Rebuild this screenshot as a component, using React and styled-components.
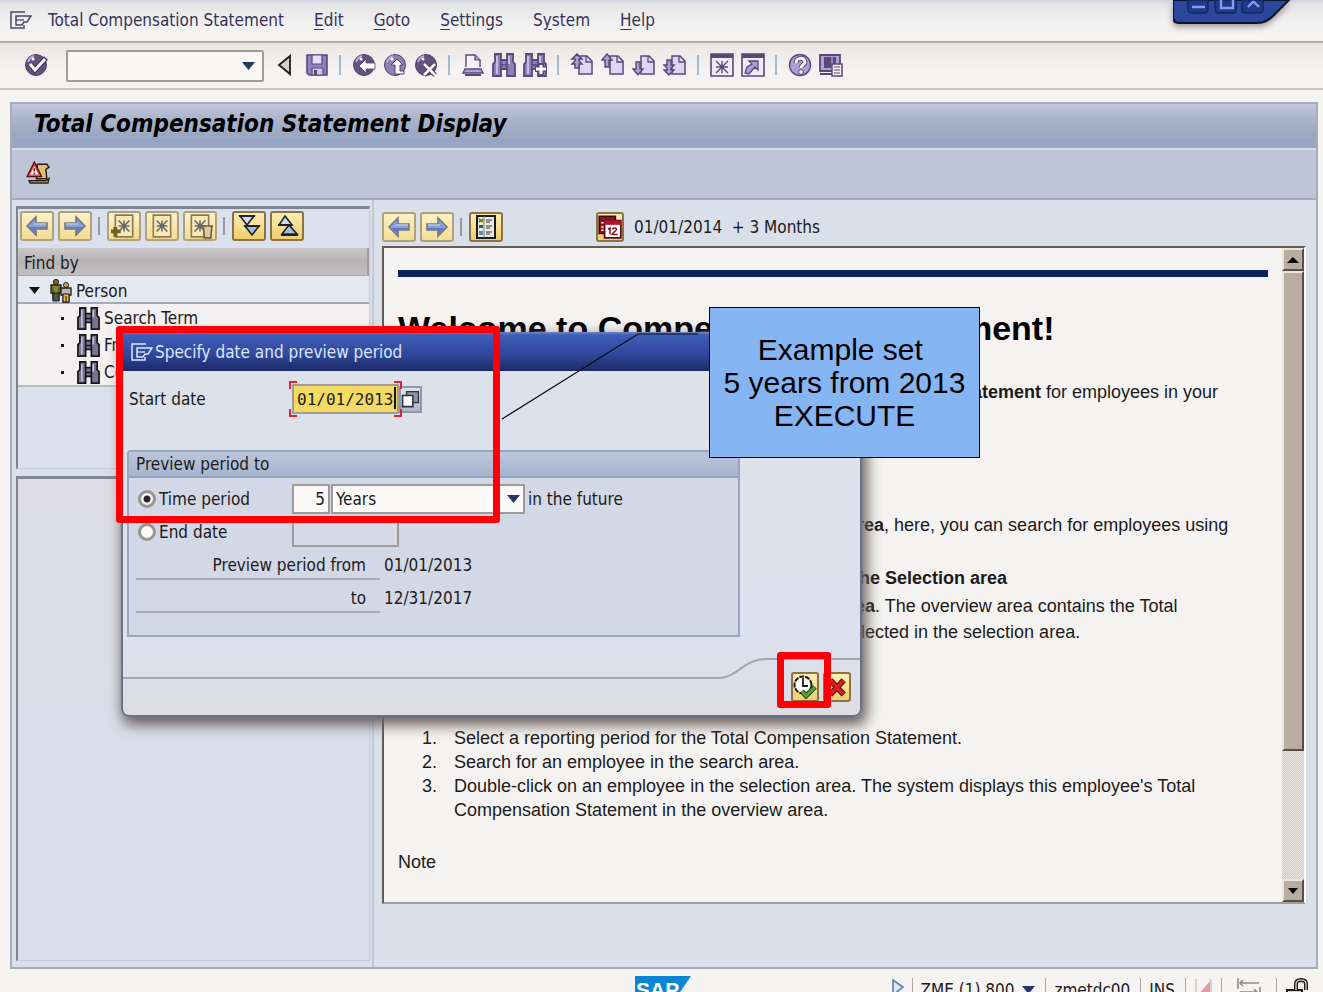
import React, { Component } from "react"
import styled, { createGlobalStyle, css } from "styled-components"

const GlobalStyle = createGlobalStyle`
  * {
    box-sizing: border-box;
  }

  body {
    margin: 0;
    background-color: #f5f4f3;
    color: #1c1a1a;
    font-family: "DejaVu Sans Condensed", "DejaVu Sans", sans-serif;
    font-size: 17px;
    line-height: 24px;
  }

  button,
  input,
  select {
    margin: 0;
    padding: 0;
    border: 0;
    border-radius: 0;
    background: none;
    color: inherit;
    font: inherit;
  }

  svg {
    display: block;
    flex: none;
  }
`

/* ---------- icons ---------- */

const PURPLE = "#5a4878"
const LILAC = "#a9a0d6"

const Icon = ({ size = 24, children }) => (
  <svg width={size} height={size} viewBox="0 0 24 24" fill="none" aria-hidden="true">
    {children}
  </svg>
)

const Ball = ({ fill = "#63527f", children }) => (
  <Icon>
    <circle cx="12" cy="12" r="10.5" fill={fill} stroke="#514168" />
    <path d="M4 9a9 9 0 0 1 6-6" stroke="#b9aede" strokeWidth="2" />
    <circle cx="9" cy="6" r="1.5" fill="#fff" />
    {children}
  </Icon>
)

const OkIcon = () => (
  <Ball>
    <path d="M6 11l5 6L22 5" stroke="#3f3158" strokeWidth="5" />
    <path d="M6 11l5 6L21 6" stroke="#fff" strokeWidth="3" />
  </Ball>
)
const BackIcon = () => (
  <Ball>
    <path d="M7 13l7-7v4h9v6h-9v4z" fill="#fff" stroke="#514168" strokeWidth="0.8" />
  </Ball>
)
const UpIcon = () => (
  <Ball fill="#8c82b4">
    <path d="M14 6l6 6h-3v6h4v3h-9v-9H8z" fill="#fff" stroke="#514168" strokeWidth="1" />
  </Ball>
)
const CancelBallIcon = () => (
  <Ball>
    <path d="M10 11l11 11M21 11L10 22" stroke="#514168" strokeWidth="5" />
    <path d="M10 11l11 11M21 11L10 22" stroke="#fff" strokeWidth="2.6" />
  </Ball>
)
const SaveIcon = () => (
  <Icon>
    <path d="M2 2h20v20H4l-2-2z" fill="#8e84bd" stroke={PURPLE} strokeWidth="1.6" />
    <path d="M7 2h10v9H7z" fill="#e4def6" stroke={PURPLE} strokeWidth="1.2" />
    <path d="M7 15h11v7H7z" fill="#cdc6ea" stroke={PURPLE} strokeWidth="1.2" />
    <path d="M9 17h3v5H9z" fill={PURPLE} />
  </Icon>
)
const PrintIcon = () => (
  <Icon>
    <path d="M5 14V2h9l5 5v7" fill="#f3f0fb" stroke={PURPLE} strokeWidth="1.4" />
    <path d="M14 2v5h5" fill={LILAC} stroke={PURPLE} strokeWidth="1.2" />
    <path d="M4 16h16l2 4H2z" fill={LILAC} stroke={PURPLE} strokeWidth="1.4" />
    <path d="M4 22h16" stroke={PURPLE} strokeWidth="2" />
  </Icon>
)

const Binoculars = ({ fill, stroke, shine }) => (
  <>
    <path
      d="M3 1h6v6h6V1h6v8l2 2v12h-8v-7H9v7H1V11l2-2z"
      fill={fill}
      stroke={stroke}
      strokeWidth="1.8"
    />
    <path d="M9 7v9M15 7v9M9 12h6" stroke={stroke} strokeWidth="1.6" />
    <path d="M5 3v18M17 3v8" stroke={shine} strokeWidth="1.6" />
  </>
)
const FindIcon = () => (
  <Icon>
    <Binoculars fill="#8b80bb" stroke={PURPLE} shine="#d5cdf0" />
  </Icon>
)
const FindNextIcon = () => (
  <Icon>
    <Binoculars fill="#8b80bb" stroke={PURPLE} shine="#d5cdf0" />
    <path d="M18 10v13M12 16h12" stroke={PURPLE} strokeWidth="6" />
    <path d="M18 12v9M13 16h10" stroke="#fff" strokeWidth="3" />
  </Icon>
)
const DarkFindIcon = () => (
  <Icon size={23}>
    <Binoculars fill="#77748f" stroke="#17151c" shine="#c6c6dc" />
  </Icon>
)

const PageIcon = ({ double, down }) => (
  <Icon>
    <path d="M9 3h8l5 5v13H9z" fill="#ddd7f3" stroke={PURPLE} strokeWidth="1.5" />
    <path d="M16 3v6h6" stroke={PURPLE} strokeWidth="1.3" />
    {!down && !double && <path d="M6 1l5 6H8v7H4V7H1z" fill={LILAC} stroke={PURPLE} strokeWidth="1.4" />}
    {double && !down && (
      <path d="M7 1l5 5H9v2l3 3H9v4H5v-4H2l3-3V6H2z" fill={LILAC} stroke={PURPLE} strokeWidth="1.5" />
    )}
    {down && !double && <path d="M6 22l-5-6h3V9h4v7h3z" fill={LILAC} stroke={PURPLE} strokeWidth="1.4" />}
    {double && down && (
      <path d="M6 22l-5-5h3v-2l-3-3h3V7h4v5h3l-3 3v2h3z" fill={LILAC} stroke={PURPLE} strokeWidth="1.5" />
    )}
  </Icon>
)

const Burst = ({ cx, cy, r, color }) => (
  <path
    d={`M${cx - r} ${cy}h${r * 2}M${cx} ${cy - r}v${r * 2}M${cx - r} ${cy - r}l${r * 2} ${r * 2}M${cx + r} ${cy - r}l${-r * 2} ${r * 2}`}
    stroke={color}
    strokeWidth="1.4"
  />
)
const SessionIcon = () => (
  <Icon>
    <path d="M1 1h22v22H1z" fill="#efecf6" stroke={PURPLE} strokeWidth="1.6" />
    <path d="M1 1h22v4H1z" fill={PURPLE} />
    <Burst cx={12} cy={14} r={6} color={PURPLE} />
  </Icon>
)
const ShortcutIcon = () => (
  <Icon>
    <path d="M1 1h22v22H1z" fill="#efecf6" stroke={PURPLE} strokeWidth="1.6" />
    <path d="M1 1h22v4H1z" fill={PURPLE} />
    <path d="M8 8h9v9l-3-3-6 7-4-1 2-6 5-3z" fill={LILAC} stroke={PURPLE} strokeWidth="1.3" />
  </Icon>
)
const HelpIcon = () => (
  <Icon>
    <circle cx="12" cy="12" r="10.5" fill={LILAC} stroke={PURPLE} strokeWidth="1.4" />
    <path d="M8 10c0-6 9-6 9-1 0 3-4 3-4 6" stroke={PURPLE} strokeWidth="5" />
    <path d="M8 10c0-6 9-6 9-1 0 3-4 3-4 6" stroke="#fff" strokeWidth="3" />
    <circle cx="13" cy="19" r="2.4" fill="#fff" stroke={PURPLE} />
  </Icon>
)
const LayoutIcon = () => (
  <Icon>
    <path d="M1 2h20v16H1z" fill={LILAC} stroke={PURPLE} strokeWidth="1.8" />
    <path d="M5 4h12v11H5z" fill={PURPLE} />
    <path d="M13 4v11" stroke="#8e84bd" strokeWidth="2" />
    <path d="M1 21h12" stroke={PURPLE} strokeWidth="2" />
    <path d="M13 11h10v12H13z" fill="#f7f2e8" stroke={PURPLE} strokeWidth="1.5" />
    <path d="M15 14h6M15 17h6M15 20h6" stroke={PURPLE} strokeWidth="1.2" />
  </Icon>
)

const WindowMenuIcon = ({ color }) => (
  <Icon>
    <path d="M17 4H3v16h13v-3" stroke={color} strokeWidth="1.5" />
    <path d="M8 8h15l-4 6h-3l-2 3H8z" stroke={color} strokeWidth="1.5" />
    <path d="M8 12h8" stroke={color} strokeWidth="1.3" />
  </Icon>
)
const WarningScrollIcon = () => (
  <Icon size={25}>
    <path d="M11 4h9l2 3-3 2 1 9H10z" fill="#d9c374" stroke="#2a1c10" strokeWidth="1.4" />
    <path d="M3 20h16l3-2-1 4H4z" fill="#f1d989" stroke="#2a1c10" strokeWidth="1.4" />
    <path d="M8 2l7 14H1z" fill="#e05048" stroke="#5a1010" strokeWidth="1.3" />
    <path d="M8 6l4 8H4z" fill="#fff" />
    <path d="M8 8v3M8 12v2" stroke="#7c1414" strokeWidth="1.6" />
  </Icon>
)

const ArrowIcon = ({ flip }) => (
  <Icon size={24}>
    <g transform={flip ? "matrix(-1 0 0 1 24 0)" : undefined}>
      <path d="M2 12l9-9v6h11v6H11v6z" fill="#86a0d8" stroke="#77767c" strokeWidth="1.6" />
      <path d="M4 13h17v1H10v4z" fill="#5c78c8" />
      <path d="M9 10h12" stroke="#b4c6dc" strokeWidth="1.6" />
    </g>
  </Icon>
)
const NoteIcon = ({ plus, trash }) => (
  <Icon size={26}>
    <path d="M4 2h16v20H4z" fill="#f8e9b4" stroke="#8f7856" strokeWidth="1.5" />
    <Burst cx={12} cy={12} r={5} color="#66656a" />
    {plus && <path d="M4 13v9M0 17h9" stroke="#6b6420" strokeWidth="3.6" />}
    {trash && (
      <path d="M15 12h8l-1 11h-6zM14 12h10" fill="#d8cba0" stroke="#6f5c3c" strokeWidth="1.5" />
    )}
  </Icon>
)
const ExpandIcon = () => (
  <Icon>
    <path d="M3 2h14l-7 9z" fill="#cfdcf4" stroke="#1d222c" strokeWidth="1.6" />
    <path d="M8 12h14l-7 9z" fill="#a9bce2" stroke="#1d222c" strokeWidth="1.6" />
    <path d="M2 2h16M7 12h16" stroke="#1d222c" strokeWidth="2" />
  </Icon>
)
const CollapseIcon = () => (
  <Icon>
    <path d="M10 2l7 9H4z" fill="#cfdcf4" stroke="#1d222c" strokeWidth="1.6" />
    <path d="M14 11l8 9H7z" fill="#a9bce2" stroke="#1d222c" strokeWidth="1.6" />
    <path d="M3 11h14M6 21h17" stroke="#1d222c" strokeWidth="2" />
  </Icon>
)
const ColumnsIcon = () => (
  <Icon>
    <path d="M3 1h18v22H3z" fill="#eceadf" stroke="#191820" strokeWidth="2" />
    <path d="M10 1v22" stroke="#77767c" strokeWidth="1" />
    <path d="M5 4l4 3M9 4L5 7" stroke="#7b7a10" strokeWidth="1.6" />
    <path d="M5 10h4v3H5z" fill="#31643a" />
    <path d="M5 16h4v4H5z" fill="#5d86b8" />
    <path d="M12 5h6M12 7h4M12 11h6M12 13h4M12 17h6M12 19h4" stroke="#34333b" strokeWidth="1.2" />
  </Icon>
)
const CalendarIcon = () => (
  <Icon size={26}>
    <path d="M2 2h15v16H2z" fill="#8f1423" stroke="#3c070e" strokeWidth="1.4" />
    <path d="M4 8h3M4 12h3M4 15h3" stroke="#fff" strokeWidth="1.4" />
    <path d="M7 6h15v16H7z" fill="#fff" stroke="#5f0a16" strokeWidth="1.6" />
    <path d="M7 6h15v4H7z" fill="#b81428" />
    <path d="M10 14l2-1v6M14 14c2-2 4-1 4 0 0 2-4 3-4 5h5" stroke="#8c1020" strokeWidth="1.4" />
  </Icon>
)
const PersonsIcon = () => (
  <Icon>
    <circle cx="7" cy="3" r="2.6" fill="#8a6a28" stroke="#241d10" />
    <path d="M2 6h10v8h-2v7H4v-7H2z" fill="#7f8a30" stroke="#241d10" strokeWidth="1.3" />
    <path d="M4 14h6v8H4z" fill="#54504a" stroke="#241d10" />
    <path d="M4 8v5M10 8v5" stroke="#3c4015" />
    <circle cx="17" cy="6" r="2.5" fill="#c7a94e" stroke="#241d10" />
    <path d="M12 9h10v7h-2v7h-6v-7h-2z" fill="#b4b2c4" stroke="#241d10" strokeWidth="1.3" />
    <path d="M14 15h6v8h-6z" fill="#d9bc50" stroke="#241d10" />
    <path d="M17 17v6" stroke="#241d10" />
  </Icon>
)
const ExecuteIcon = () => (
  <Icon>
    <circle cx="10" cy="10" r="8.5" fill="#fff" stroke="#1b1b1b" strokeWidth="2" strokeDasharray="5 1" />
    <path d="M10 3v8h5" stroke="#1b1b1b" strokeWidth="1.8" />
    <path d="M9 16l4 5 9-9" stroke="#1f4a12" strokeWidth="5" />
    <path d="M9 16l4 5 9-9" stroke="#58a03a" strokeWidth="3" />
  </Icon>
)
const CloseIcon = () => (
  <Icon size={20}>
    <path d="M4 4l16 17M20 4L4 21" stroke="#5d0d10" strokeWidth="7" />
    <path d="M4 4l16 17M20 4L4 21" stroke="#d42020" strokeWidth="4.4" />
  </Icon>
)
const PickIcon = () => (
  <Icon size={19}>
    <path d="M7 2h15v14H7z" fill="#8e94a4" stroke="#30323a" strokeWidth="1.6" />
    <path d="M2 7h13v14H2z" fill="#fff" stroke="#30323a" strokeWidth="2" />
  </Icon>
)
const DownTriangle = ({ width = 13, height = 8, color = "#243a5c" }) => (
  <svg width={width} height={height} viewBox="0 0 12 8" preserveAspectRatio="none" aria-hidden="true">
    <path d="M0 0h12L6 8z" fill={color} />
  </svg>
)
const UpTriangle = () => (
  <svg width="12" height="6" viewBox="0 0 12 6" aria-hidden="true">
    <path d="M0 6h12L6 0z" fill="#000" />
  </svg>
)
const HistoryIcon = () => (
  <svg width="15" height="24" viewBox="0 0 15 24" aria-hidden="true">
    <path d="M13 3v18L2 12z" fill="#d6d0cc" stroke="#1d1a1a" strokeWidth="1.8" />
  </svg>
)

/* ---------- shell ---------- */

const Screen = styled.div`
  position: relative;
  display: flex;
  flex-direction: column;
  height: 100vh;
  overflow: hidden;
`

const MenuBar = styled.nav`
  display: flex;
  align-items: center;
  gap: 30px;
  flex: none;
  height: 43px;
  padding: 0 8px 1px;
  border-bottom: 2px solid #b0adab;
  background: linear-gradient(#cdcfdf, #e4e3e6 4px, #f3f2f2 24px, #f5f4f2);
  color: #37335a;
`

const MenuItem = styled.button`
  display: flex;
  align-items: center;
  gap: 16px;

  u {
    text-underline-offset: 3px;
  }
`

const StandardBar = styled.div`
  display: flex;
  align-items: center;
  gap: 7px;
  flex: none;
  height: 47px;
  padding: 0 24px 2px;
  border-bottom: 2px solid #c8c5c3;
  background: linear-gradient(#e9e6e4, #f5f3f1 60%);
`

const CommandField = styled.div`
  display: flex;
  align-items: center;
  width: 198px;
  height: 32px;
  margin: 2px 6px 0 11px;
  padding-right: 7px;
  border: 2px solid #a29a96;
  border-radius: 2px;
  background-color: #f8f7f5;

  input {
    flex: 1;
    min-width: 0;
    padding-left: 4px;
  }
`

const ToolButton = styled.button`
  flex: none;
  margin-right: ${props => props.$spaced ? 6 : 0}px;
`

const Divider = styled.span`
  width: 2px;
  height: ${props => props.$tall ? 20 : 18}px;
  margin: ${props => props.$tall ? "0 4px 0 3px" : "0 3px 0 2px"};
  background-color: ${props => props.$tall ? "#a3b9cc" : "#9a9a9e"};
`

const WindowTab = styled.div`
  position: absolute;
  top: 0;
  right: 32px;
  width: 118px;
  height: 26px;
  filter: drop-shadow(0 3px 3px #a09890);
`

const Frame = styled.main`
  display: flex;
  flex-direction: column;
  flex: 1;
  min-height: 0;
  margin: 12px 5px 0 10px;
  border: 2px solid #a9abb8;
  background-color: #dae0ea;
`

const Title = styled.h1`
  flex: none;
  height: 46px;
  margin: 0;
  padding: 5px 22px;
  border-bottom: 2px solid #d8dfec;
  background: linear-gradient(#c2c9df, #aab3c9 35%, #95a4c2 85%, #9fabc8);
  color: #000;
  font-size: 24px;
  font-style: italic;
  font-weight: bold;
  line-height: 30px;
`

const AppBar = styled.div`
  display: flex;
  align-items: center;
  flex: none;
  height: 50px;
  padding: 0 14px 4px;
  border-bottom: 2px solid #a6a9b9;
  background-color: #bec5d7;
`

const Workspace = styled.div`
  display: flex;
  flex: 1;
  min-height: 0;
`

/* ---------- left column ---------- */

const Sidebar = styled.aside`
  display: flex;
  flex-direction: column;
  gap: 7px;
  flex: none;
  width: 360px;
  padding: 6px 2px 6px 4px;
`

const Pane = styled.section`
  border: 1px solid #c3cad8;
  border-top: 3px solid #7f8693;
  border-left: 2px solid #7d828d;
  background-color: #dbe1ec;
  ${props => props.$fill ? css`
    flex: 1;
    background: linear-gradient(#dedde3, #d9dfea 50%);
  ` : css`
    height: 263px;
  `}
`

const IconBar = styled.div`
  display: flex;
  align-items: center;
  gap: 4px;
  height: 39px;
  padding: 0 2px 6px;
`

const IconButton = styled.button`
  display: flex;
  align-items: center;
  justify-content: center;
  flex: none;
  width: ${props => props.$narrow ? 28 : 34}px;
  height: 30px;
  border: 2px solid ${props => props.$strong ? "#8c7346" : "#b2a178"};
  border-radius: 3px;
  background: ${props => props.$strong
    ? "linear-gradient(#fbeeb4, #f0cf6c)"
    : "linear-gradient(#fbf1c8, #f2dd94)"};
`

const FindBy = styled.h2`
  margin: 0;
  padding: 3px 6px 0;
  border-right: 2px solid #a09c9e;
  border-bottom: 1px solid #a7a3a4;
  background: linear-gradient(#c9c7c9, #b7b4b6 50%, #c2bfc1);
  font-size: 17px;
  font-weight: normal;
  line-height: 24px;
`

const TreeRoot = styled.div`
  display: flex;
  align-items: center;
  gap: 3px;
  height: 28px;
  padding: 3px 0 0 11px;
  border-bottom: 2px solid #a3aabb;
  background-color: #e4e8f0;

  svg:first-child {
    margin-right: 6px;
  }
`

const Tree = styled.ul`
  margin: 0;
  padding: 0;
  border-bottom: 2px solid #b8bac3;
  background-color: #f2f0f0;
  list-style: none;
`

const TreeItem = styled.li`
  display: flex;
  align-items: center;
  gap: 4px;
  height: 27px;
  padding: 1px 0 0 43px;

  &::before {
    width: 3px;
    height: 3px;
    margin-right: 9px;
    background-color: #1c1a1a;
    content: "";
  }
`

/* ---------- right column ---------- */

const Content = styled.section`
  display: flex;
  flex-direction: column;
  flex: 1;
  min-width: 0;
  padding: 8px 10px 63px 8px;
  border-left: 2px solid #c2c9d4;
`

const ContentBar = styled.div`
  display: flex;
  align-items: center;
  gap: 4px;
  flex: none;
  height: 38px;
`

const Period = styled.div`
  display: flex;
  align-items: center;
  gap: 10px;
  margin-left: 89px;
  white-space: pre;
`

const Viewer = styled.div`
  display: flex;
  flex: 1;
  min-height: 0;
  border: 2px solid #655b55;
  border-right-color: #fff;
  border-bottom-color: #a39b95;
  background-color: #f4f3f1;
`

const Article = styled.article`
  flex: 1;
  min-width: 0;
  overflow: hidden;
  padding: 22px 14px 0;
  font-family: "Liberation Sans", Arial, sans-serif;
  font-size: 18px;

  hr {
    height: 7px;
    margin: 0;
    border: 0;
    background-color: #0c2358;
  }

  p {
    margin: 0;
    white-space: nowrap;
  }
`

const Heading = styled.h2`
  display: flex;
  gap: 45px;
  margin: 32px 0;
  color: #000;
  font-size: 34px;
  line-height: 38px;
  white-space: nowrap;
`

const Paragraph = styled.p`
  && {
    margin-bottom: ${props => props.$after || 0}px;
    padding-left: ${props => props.$indent || 0}px;
    line-height: 26px;
  }
`

const Steps = styled.ol`
  margin: 0 0 28px;
  padding: 0 0 0 24px;
  list-style: none;

  li {
    display: flex;
    max-width: 820px;
  }

  span {
    flex: 0 0 32px;
  }
`

const ScrollBar = styled.div`
  display: flex;
  flex-direction: column;
  flex: none;
  width: 22px;
  background: repeating-conic-gradient(#cfc7c0 0 25%, #ece8e4 0 50%) 0 0 / 2px 2px;
`

const bevel = css`
  border: 2px solid #e9e3dc;
  border-right-color: #5b4d45;
  border-bottom-color: #5b4d45;
  background-color: #b9ada0;
`

const ScrollButton = styled.button`
  ${bevel}
  display: flex;
  align-items: center;
  justify-content: center;
  flex: none;
  height: 23px;
`

const ScrollThumb = styled.div`
  ${bevel}
  flex: 0 1 480px;
`

const ScrollSpace = styled.div`
  flex: 1;
`

/* ---------- dialog ---------- */

const Dialog = styled.form`
  position: absolute;
  top: 332px;
  left: 121px;
  display: flex;
  flex-direction: column;
  width: 741px;
  border: 2px solid #65718f;
  border-top: 0;
  border-radius: 4px 4px 8px 8px;
  background: linear-gradient(#dde1e8, #dce2ee 80%, #dddce2);
  box-shadow: 3px 6px 14px 2px #6b5f5c;
`

const DialogTitle = styled.h2`
  display: flex;
  align-items: center;
  gap: 2px;
  height: 39px;
  margin: 0 -1px;
  padding-left: 7px;
  border-radius: 4px 4px 0 0;
  background: linear-gradient(#6f86c4, #3f5db6 3px, #31499f 55%, #1b2a66);
  color: #dfe6fa;
  font-size: 17px;
  font-weight: normal;
`

const StartRow = styled.div`
  display: flex;
  align-items: center;
  height: 32px;
  margin: 12px 6px 35px;

  label {
    width: 163px;
  }
`

const inset = css`
  height: 30px;
  border: 2px solid #a09a9a;
  background-color: #fbfaf8;
`

const FocusBox = styled.div`
  position: relative;
  width: 107px;

  input {
    ${inset}
    display: block;
    width: 100%;
    padding-left: 3px;
    background-color: #f3da62;
    font-family: "DejaVu Sans Mono", monospace;
    font-size: 16px;
  }

  svg {
    position: absolute;
    top: -3px;
    left: -3px;
  }
`

const PickButton = styled.button`
  display: flex;
  align-items: center;
  justify-content: center;
  width: 23px;
  height: 27px;
  border: 2px solid #8f99ab;
  background: linear-gradient(#dfe3ea, #a9b4c6);
`

const Group = styled.fieldset`
  height: 187px;
  min-width: 0;
  margin: 0 120px 0 4px;
  padding: 0;
  border: 2px solid #98a5bd;
  border-radius: 4px 4px 0 0;
  background-color: #d3d8e6;
`

const Legend = styled.legend`
  float: left;
  width: 100%;
  padding: 0 7px;
  border-bottom: 2px solid #93a2bd;
  background: linear-gradient(#bcc6da, #a6b5d0);
`

const GroupRow = styled.div`
  display: flex;
  align-items: center;
  clear: both;
  height: 33px;
  padding-left: 9px;

  &:first-of-type {
    height: 37px;
    padding-top: 5px;
  }
`

const RadioLabel = styled.label`
  display: flex;
  align-items: center;
  gap: 3px;
  width: 154px;

  input {
    width: 18px;
    height: 18px;
    border: 3px solid #9a9494;
    border-radius: 50%;
    background-color: #fbfaf7;
    appearance: none;
  }

  input:checked {
    background: radial-gradient(#2e2323 0 3px, #fbfaf7 4px);
  }
`

const NumberInput = styled.input`
  ${inset}
  width: ${props => props.$wide ? 107 : 38}px;
  padding-right: 3px;
  background-color: ${props => props.$wide ? "#d6dbe7" : "#fbfaf8"};
  text-align: right;
`

const SelectBox = styled.div`
  ${inset}
  display: grid;
  align-items: center;
  width: 194px;
  margin: 0 3px 0 1px;

  select {
    grid-area: 1 / 1;
    width: 100%;
    padding-left: 3px;
    appearance: none;
  }

  svg {
    grid-area: 1 / 1;
    margin-right: 3px;
    justify-self: end;
    pointer-events: none;
  }
`

const OutputRow = styled.div`
  display: flex;
  height: 33px;
  padding: 5px 0 1px 7px;

  span {
    width: 244px;
    padding-right: 14px;
    border-bottom: 2px solid #a7abb8;
    text-align: right;
  }

  output {
    padding: 0 4px;
  }
`

const DialogFooter = styled.div`
  display: grid;
  height: 57px;
  margin-top: 21px;
`

const Edge = styled.div`
  display: flex;
  grid-area: 1 / 1;
  height: 21px;

  &::before {
    flex: 1;
    border-bottom: 2px solid #a5a5ac;
    content: "";
  }

  &::after {
    width: 94px;
    border-top: 2px solid #a5a5ac;
    content: "";
  }
`

const Actions = styled.div`
  display: flex;
  grid-area: 1 / 1;
  justify-content: flex-end;
  gap: 4px;
  padding: 14px 9px 0;
`

/* ---------- callouts ---------- */

const Highlight = styled.div`
  position: absolute;
  top: 326px;
  left: 116px;
  width: 384px;
  height: 197px;
  border: 7px solid #fb0007;
  border-radius: 3px;
  pointer-events: none;

  ${props => props.$small && css`
    top: 652px;
    left: 777px;
    width: 54px;
    height: 56px;
  `}
`

const Pointer = styled.svg`
  position: absolute;
  top: 332px;
  left: 500px;
  pointer-events: none;
`

const Callout = styled.div`
  position: absolute;
  top: 307px;
  left: 709px;
  display: flex;
  flex-direction: column;
  justify-content: center;
  width: 271px;
  height: 151px;
  border: 1px solid #000;
  background-color: #86b5f4;
  color: #000;
  font-family: "Liberation Sans", Arial, sans-serif;
  font-size: 30px;
  line-height: 33px;
  text-align: center;
  white-space: pre;
`

/* ---------- status bar ---------- */

const StatusBar = styled.footer`
  display: flex;
  align-items: flex-start;
  gap: 8px;
  flex: none;
  height: 23px;
  padding: 9px 14px 0;
  overflow: hidden;
`

const Logo = styled.div`
  flex: 1;
  margin-top: -2px;
  padding-left: 621px;
`

const StatusDivider = styled.span`
  width: 1px;
  height: 20px;
  background-color: #aaa6a4;
`

const StatusCell = styled.span`
  display: flex;
  align-items: center;
  gap: 8px;
  padding-right: 2px;
`

const menus = [["", "E", "dit"], ["", "G", "oto"], ["", "S", "ettings"], ["S", "y", "stem"], ["", "H", "elp"]]

const steps = [
  "Select a reporting period for the Total Compensation Statement.",
  "Search for an employee in the search area.",
  "Double-click on an employee in the selection area. The system displays this employee's Total Compensation Statement in the overview area.",
]

const toolGroups = [
  [["Back", <BackIcon />], ["Exit", <UpIcon />], ["Cancel", <CancelBallIcon />]],
  [["Print", <PrintIcon />], ["Find", <FindIcon />], ["Find next", <FindNextIcon />]],
  [
    ["First page", <PageIcon double />],
    ["Previous page", <PageIcon />],
    ["Next page", <PageIcon down />],
    ["Last page", <PageIcon double down />],
  ],
  [["New session", <SessionIcon />], ["Create shortcut", <ShortcutIcon />]],
  [["Help", <HelpIcon />], ["Customize layout", <LayoutIcon />]],
]

class App extends Component {
  render() {
    return (
      <Screen>
        <GlobalStyle />
        <MenuBar>
          <MenuItem>
            <WindowMenuIcon color="#4b4768" />
            Total Compensation Statement
          </MenuItem>
          {menus.map(([before, key, after]) => (
            <MenuItem key={key}>
              <span>{before}<u>{key}</u>{after}</span>
            </MenuItem>
          ))}
        </MenuBar>

        <StandardBar>
          <ToolButton aria-label="Enter"><OkIcon /></ToolButton>
          <CommandField>
            <input aria-label="Command" />
            <DownTriangle />
          </CommandField>
          <ToolButton $spaced aria-label="History"><HistoryIcon /></ToolButton>
          <ToolButton aria-label="Save"><SaveIcon /></ToolButton>
          {toolGroups.map((group, index) => (
            <React.Fragment key={index}>
              <Divider $tall />
              {group.map(([label, icon]) => (
                <ToolButton key={label} aria-label={label}>{icon}</ToolButton>
              ))}
            </React.Fragment>
          ))}
        </StandardBar>

        <WindowTab>
          <svg width="118" height="26" viewBox="0 0 118 26">
            <path d="M0 0v17q0 6 6 6h78q10 0 18-9l14-14z" fill="#2b479c" stroke="#0b1430" strokeWidth="2" />
            <path d="M15 0h20v9q0 4-4 4H19q-4 0-4-4zM42 0h21v9q0 4-4 4H46q-4 0-4-4zM69 0h21v9q0 4-4 4H73q-4 0-4-4z" fill="#213a88" stroke="#14265f" strokeWidth="1.5" />
            <path d="M19 7h13M48 0v8h12V0M75 7l5-5 1 0 5 5" stroke="#7f9ff0" strokeWidth="2.4" fill="none" />
          </svg>
        </WindowTab>

        <Frame>
          <Title>Total Compensation Statement Display</Title>
          <AppBar>
            <ToolButton aria-label="Messages"><WarningScrollIcon /></ToolButton>
          </AppBar>
          <Workspace>
            <Sidebar>
              <Pane>
                <IconBar>
                  <IconButton aria-label="Back"><ArrowIcon /></IconButton>
                  <IconButton aria-label="Forward"><ArrowIcon flip /></IconButton>
                  <Divider />
                  <IconButton aria-label="Create variant"><NoteIcon plus /></IconButton>
                  <IconButton aria-label="Change variant"><NoteIcon /></IconButton>
                  <IconButton aria-label="Delete variant"><NoteIcon trash /></IconButton>
                  <Divider />
                  <IconButton $strong aria-label="Expand all"><ExpandIcon /></IconButton>
                  <IconButton $strong aria-label="Collapse all"><CollapseIcon /></IconButton>
                </IconBar>
                <FindBy>Find by</FindBy>
                <TreeRoot>
                  <DownTriangle width={11} height={7} color="#111" />
                  <PersonsIcon />
                  Person
                </TreeRoot>
                <Tree>
                  <TreeItem><DarkFindIcon />Search Term</TreeItem>
                  <TreeItem><DarkFindIcon />Free Search</TreeItem>
                  <TreeItem><DarkFindIcon />Collective Search</TreeItem>
                </Tree>
              </Pane>
              <Pane $fill />
            </Sidebar>

            <Content>
              <ContentBar>
                <IconButton aria-label="Back"><ArrowIcon /></IconButton>
                <IconButton aria-label="Forward"><ArrowIcon flip /></IconButton>
                <Divider />
                <IconButton $strong aria-label="Column configuration"><ColumnsIcon /></IconButton>
                <Period>
                  <IconButton $strong $narrow aria-label="Date and preview period"><CalendarIcon /></IconButton>
                  {"01/01/2014  + 3 Months"}
                </Period>
              </ContentBar>
              <Viewer>
                <Article>
                  <hr />
                  <Heading>
                    <span>Welcome to Compensation</span>
                    <span>Statement!</span>
                  </Heading>
                  <Paragraph $indent={556} $after={107}><b>Statement</b> for employees in your</Paragraph>
                  <Paragraph $indent={449} $after={27}><b>area</b>, here, you can search for employees using</Paragraph>
                  <Paragraph $indent={455} $after={2}><b>the Selection area</b></Paragraph>
                  <Paragraph $indent={440}><b>area</b>. The overview area contains the Total</Paragraph>
                  <Paragraph $indent={444} $after={81}>selected in the selection area.</Paragraph>
                  <Steps>
                    {steps.map((step, index) => (
                      <li key={step}><span>{index + 1}.</span>{step}</li>
                    ))}
                  </Steps>
                  <p>Note</p>
                </Article>
                <ScrollBar>
                  <ScrollButton aria-label="Scroll up"><UpTriangle /></ScrollButton>
                  <ScrollThumb />
                  <ScrollSpace />
                  <ScrollButton aria-label="Scroll down">
                    <DownTriangle width={10} height={6} color="#000" />
                  </ScrollButton>
                </ScrollBar>
              </Viewer>
            </Content>
          </Workspace>
        </Frame>

        <StatusBar>
          <Logo>
            <svg width="56" height="28" viewBox="0 0 56 28" role="img" aria-label="SAP">
              <path d="M0 0h56L37 28H0z" fill="#0b86d6" />
              <text x="1" y="21" fill="#fff" fontFamily="Liberation Sans" fontSize="21" fontWeight="bold">SAP</text>
            </svg>
          </Logo>
          <svg width="12" height="20" viewBox="0 0 12 20" aria-hidden="true">
            <path d="M1 2v15l10-8z" fill="#dbe8f6" stroke="#5d7fa8" strokeWidth="1.6" />
          </svg>
          <StatusDivider />
          <StatusCell>ZME (1) 800 <DownTriangle color="#2b3867" /></StatusCell>
          <StatusDivider />
          <StatusCell>zmetdc00</StatusCell>
          <StatusDivider />
          <StatusCell>INS</StatusCell>
          <StatusDivider />
          <svg width="19" height="22" viewBox="0 0 19 22" aria-hidden="true">
            <path d="M2 1v20M17 1v20" stroke="#b9b2b0" />
            <path d="M4 17L16 3v16z" fill="#e79ba0" />
          </svg>
          <StatusDivider />
          <svg width="38" height="22" viewBox="0 0 38 22" aria-hidden="true">
            <path d="M8 0v11M30 9v11M11 5h18M13 2l-3 3 3 3M10 14h17M24 11l3 3-3 3" stroke="#8f8b89" strokeWidth="1.6" fill="none" />
          </svg>
          <StatusDivider />
          <svg width="24" height="22" viewBox="0 0 24 22" aria-hidden="true">
            <path d="M2 12h15v9H2z" fill="#d8d4d0" stroke="#201c1c" strokeWidth="2" />
            <path d="M11 12V6q0-4 5-4t5 4v6" stroke="#201c1c" strokeWidth="4" fill="none" />
            <path d="M11 12V6q0-4 5-4t5 4v6" stroke="#e6e2de" strokeWidth="1.2" fill="none" />
          </svg>
        </StatusBar>

        <Dialog onSubmit={event => event.preventDefault()}>
          <DialogTitle>
            <WindowMenuIcon color="#dfe6fa" />
            Specify date and preview period
          </DialogTitle>
          <StartRow>
            <label htmlFor="start-date">Start date</label>
            <FocusBox>
              <input id="start-date" defaultValue="01/01/2013" />
              <svg width="113" height="36" viewBox="0 0 113 36" fill="none" aria-hidden="true">
                <path d="M1 8V1h7M105 1h7v7M112 28v7h-7M8 35H1v-7" stroke="#d8242c" strokeWidth="2" />
                <path d="M106 6v22" stroke="#111" strokeWidth="2" />
              </svg>
            </FocusBox>
            <PickButton type="button" aria-label="Choose date"><PickIcon /></PickButton>
          </StartRow>
          <Group>
            <Legend>Preview period to</Legend>
            <GroupRow>
              <RadioLabel>
                <input type="radio" name="period" defaultChecked />
                Time period
              </RadioLabel>
              <NumberInput aria-label="Number of periods" defaultValue="5" />
              <SelectBox>
                <select aria-label="Period unit">
                  <option>Years</option>
                </select>
                <DownTriangle />
              </SelectBox>
              in the future
            </GroupRow>
            <GroupRow>
              <RadioLabel>
                <input type="radio" name="period" />
                End date
              </RadioLabel>
              <NumberInput $wide aria-label="End date" />
            </GroupRow>
            <OutputRow><span>Preview period from</span><output>01/01/2013</output></OutputRow>
            <OutputRow><span>to</span><output>12/31/2017</output></OutputRow>
          </Group>
          <DialogFooter>
            <Edge>
              <svg width="46" height="21" viewBox="0 0 46 21" fill="none" aria-hidden="true">
                <path d="M0 20C16 20 24 1 46 1" stroke="#a5a5ac" strokeWidth="2" />
              </svg>
            </Edge>
            <Actions>
              <IconButton $strong $narrow aria-label="Execute"><ExecuteIcon /></IconButton>
              <IconButton $strong $narrow type="button" aria-label="Cancel"><CloseIcon /></IconButton>
            </Actions>
          </DialogFooter>
        </Dialog>

        <Highlight />
        <Highlight $small />
        <Pointer width="200" height="90" viewBox="0 0 200 90" fill="none">
          <path d="M2 87L138 2h60" stroke="#0a0a14" strokeWidth="1.2" />
        </Pointer>
        <Callout>
          <span>{"Example set "}</span>
          <span>5 years from 2013</span>
          <span>EXECUTE</span>
        </Callout>
      </Screen>
    )
  }
}

export default App
